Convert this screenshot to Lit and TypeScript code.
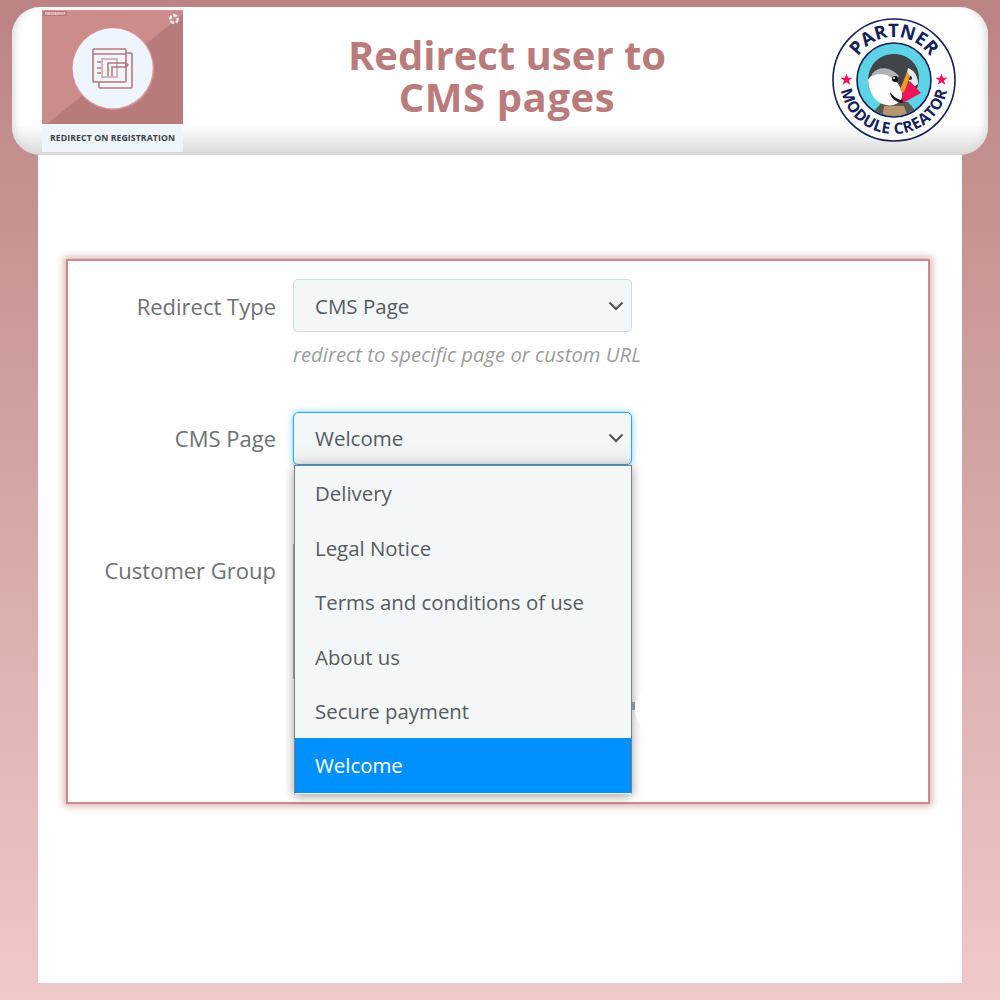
import { LitElement, html, css, svg } from "lit";
import { customElement } from "lit/decorators.js";

const chevron = html`<svg class="chev" viewBox="0 0 16 10" width="16" height="10"><path d="M1.5 1.5 L8 8 L14.500 1.500" fill="none" stroke="#4a4f52" stroke-width="2"/></svg>`;

const star = "l1.6 4.2 4.4 .1 -3.5 2.700 1.300 4.300 -3.800 -2.500 -3.800 2.500 1.300 -4.300 -3.500 -2.700 4.400 -.1z";

const badge = svg`
  <defs>
    <path id="arcTop" d="M 19 62 A 43 43 0 0 1 105 62"/>
    <path id="arcBot" d="M 8 62 A 54 54 0 0 0 116 62"/>
    <clipPath id="inner"><circle cx="62" cy="62" r="36"/></clipPath>
  </defs>
  <circle cx="62" cy="62" r="61" fill="#fff" stroke="#14205a" stroke-width="1.6"/>
  <circle cx="62" cy="62" r="37" fill="#5fd3e6" stroke="#14205a" stroke-width="1.6"/>
  <text font-family="'Open Sans',sans-serif" font-weight="700" font-size="18.5" fill="#14205a" letter-spacing="0"><textPath href="#arcTop" startOffset="50%" text-anchor="middle">PARTNER</textPath></text>
  <text font-family="'Open Sans',sans-serif" font-weight="700" font-size="15.5" fill="#14205a" letter-spacing="0.4"><textPath href="#arcBot" startOffset="50%" text-anchor="middle">MODULE CREATOR</textPath></text>
  <path d="M14.500 55.500 ${star}" fill="#f0145a"/>
  <path d="M109.500 55.500 ${star}" fill="#f0145a"/>
  <g clip-path="url(#inner)">
    <path d="M38 98 L50 84 H76 L88 98 V100 H38Z" fill="#5a5a50"/>
    <path d="M50 100 L52 88 H72 L76 100Z" fill="#b8946f"/>
    <path d="M36 64 C36 44 50 36 62 36 C76 36 87 46 87 60 C87 72 80 82 68 84 C50 90 38 80 36 64Z" fill="#3f4548"/>
    <path d="M36 62 C40 55 48 54 54 56 C62 60 68 66 70 74 C72 84 62 89 54 87 C44 85 37 76 36 62Z" fill="#fff"/>
    <path d="M40 56 C46 48 58 48 67 58 L64 62 C56 56 48 54 40 58Z" fill="#aeb4b8"/>
    <path d="M76 50 C82 52 86 58 86 66 L80 70 C76 62 74 56 76 50Z" fill="#e8e8e8"/>
    <path d="M58 74 C62 80 68 82 72 83 L72 85 C64 85 58 80 58 74Z" fill="#1a1a1a"/>
    <circle cx="63" cy="61" r="3" fill="#111"/><circle cx="62" cy="60" r="1" fill="#fff"/>
    <circle cx="78" cy="60" r="2" fill="#222"/>
    <path d="M68 72 L75 54 L78 58 L72 76Z" fill="#f39a1e"/>
  </g>
  <path d="M70 77 L78 63 L89 75 L71 85 Z" fill="#f0145a"/>
`;

const thumbIcon = svg`
  <g fill="none" stroke="#b77a7a" stroke-width="1.6">
    <rect x="57" y="43" width="33" height="35" rx="1"/>
    <rect x="51" y="39" width="33" height="33" rx="1" fill="#eef5fd"/>
    <path d="M51 44 H84"/>
    <rect x="60" y="49" width="15" height="18" stroke="#d5a5a5"/>
    <path d="M66 66 V53 H84 M70 66 V57 H84"/>
    <path d="M83 51 L87 55 L83 59Z" fill="#b77a7a" stroke="none"/>
    <path d="M55 52 h4 M55 58 h4 M55 63 h4"/>
  </g>`;

@customElement("app-root")
export class AppRoot extends LitElement {
  static styles = css`
    :host {
      display: block;
      width: 1000px;
      height: 1000px;
      overflow: hidden;
      font-family: "Open Sans", sans-serif;
      background: linear-gradient(#bb8484 0%, #f0c9c9 100%);
    }
    .page { padding-top: 7px; position: relative; }
    .header {
      height: 148px;
      margin: 0 12px;
      border-radius: 28px;
      background: linear-gradient(#ffffff 0%, #ffffff 80%, #d8d8d8 100%);
      box-shadow: inset 8px 0 8px -6px #d8d8d8, inset -8px 0 8px -6px #d8d8d8;
      display: grid;
      grid-template-columns: 141px 1fr 124px;
      align-items: center;
      padding: 0 32px 0 30px;
      position: relative;
      z-index: 1;
    }
    .thumb {
      width: 141px;
      height: 142px;
      align-self: start;
      margin-top: 3px;
      display: flex;
      flex-direction: column;
    }
    .thumb svg { display: block; }
    .thumb-label {
      height: 28px;
      background: #eef5fd;
      color: #3c3f44;
      font-size: 8.7px;
      font-weight: 700;
      letter-spacing: 0.1px;
      text-align: center;
      line-height: 29px;
      white-space: nowrap;
    }
    h1 {
      margin: 0 1px 10px 0;
      text-align: center;
      color: #b97b7b;
      font-size: 40px;
      line-height: 42px;
      font-weight: 700;
    }
    .line-two { letter-spacing: 0.6px; }
    .badge { display: block; margin-bottom: 3px; }
    .panel {
      background: #fff;
      margin: 0 38px;
      height: 828px;
      padding: 104px 32px 0 28px;
      box-sizing: border-box;
    }
    .card {
      height: 545px;
      box-sizing: border-box;
      border: 2.5px solid #c98c8c;
      box-shadow: 0 0 7px 2px rgba(190, 120, 120, 0.6);
      padding: 18px 0 0 0;
      display: flex;
      flex-direction: column;
    }
    .row {
      display: grid;
      grid-template-columns: 208px 339px;
      column-gap: 17px;
      align-items: start;
    }
    .label {
      text-align: right;
      color: #6d7173;
      font-size: 22px;
      line-height: 54px;
      white-space: nowrap;
    }
    .second .label { line-height: 52px; }
    .control { position: relative; }
    .select {
      height: 53px;
      box-sizing: border-box;
      background: #f3f7f8;
      border: 1.5px solid #c5dde5;
      border-radius: 5px;
      padding: 0 7px 0 21px;
      display: flex;
      align-items: center;
      justify-content: space-between;
      color: #565b5e;
      font-size: 20.5px;
    }
    .select.open {
      border-color: #27a9ee;
      box-shadow: 0 0 6px rgba(60, 180, 250, 0.7);
      background: linear-gradient(#f3f7f8 60%, #ebeeee 100%);
      padding-bottom: 2px;
    }
    .help {
      margin-top: 7px;
      height: 32px;
      color: #9a9d9e;
      font-style: italic;
      font-size: 20.3px;
      line-height: 30px;
      white-space: nowrap;
    }
    .second { margin-top: 41px; }
    .third { margin-top: 78px; }
    .ghost {
      margin-top: 1px;
      height: 135px;
      border-left: 1.5px solid #a3b4bb;
    }
    .list {
      position: absolute;
      left: 1px;
      top: 53px;
      width: 338px;
      box-sizing: border-box;
      padding-top: 0.4px;
      background: #f3f7f8;
      border: 1.5px solid #7e7e7e;
      border-bottom: 1px solid #fff;
      box-shadow: 0 2px 10px rgba(0, 0, 0, 0.38);
      z-index: 2;
    }
    .opt {
      height: 54.4px;
      line-height: 54.4px;
      padding-left: 20px;
      color: #565b5e;
      font-size: 20.4px;
      white-space: nowrap;
    }
    .opt.sel { background: #0091ff; color: #fff; }
    .bump {
      position: absolute;
      left: 342px;
      top: 276px;
      width: 36px;
      height: 42px;
      border-radius: 50%;
      background: #fff;
      z-index: 3;
    }
    .bump::before {
      content: "";
      position: absolute;
      left: -3px;
      top: 14px;
      width: 3px;
      height: 8px;
      background: #7d95a8;
    }
  `;

  render() {
    const options = ["Delivery", "Legal Notice", "Terms and conditions of use", "About us", "Secure payment", "Welcome"];
    return html`<div class="page">
      <div class="header">
        <div class="thumb">
          <svg width="141" height="114" viewBox="0 0 141 114">
            <rect width="141" height="114" fill="#cd8c8c"/>
            <rect width="141" height="1" fill="#ec8d8d"/>
            <path d="M141 4 V114 H5 Z" fill="#b77b7b"/>
            <rect x="1" y="1" width="24" height="5" fill="#b67878"/>
            <text x="3" y="4.600" font-family="'Open Sans',sans-serif" font-size="3.200" font-weight="700" fill="#f3e4e4">PRESTASHOP</text>
            <circle cx="71.200" cy="58.800" r="41" fill="#e8a5a5" opacity=".7"/>
            <circle cx="70.700" cy="58.300" r="40" fill="#eef5fd"/>
            ${thumbIcon}
            <g fill="none" stroke="#f4f0f0" stroke-width="2.400"><circle cx="132" cy="9" r="3.800" stroke-dasharray="4 1.500"/></g>
          </svg>
          <div class="thumb-label">REDIRECT ON REGISTRATION</div>
        </div>
        <h1>Redirect user to<br /><span class="line-two">CMS pages</span></h1>
        <svg class="badge" width="124" height="124" viewBox="0 0 124 124">${badge}</svg>
      </div>
      <div class="panel">
        <div class="card">
          <div class="row">
            <div class="label">Redirect Type</div>
            <div class="control">
              <div class="select">CMS Page ${chevron}</div>
              <div class="help">redirect to specific page or custom URL</div>
            </div>
          </div>
          <div class="row second">
            <div class="label">CMS Page</div>
            <div class="control">
              <div class="select open">Welcome ${chevron}</div>
              <div class="list">
                ${options.map((o) => html`<div class="opt ${o === "Welcome" ? "sel" : ""}">${o}</div>`)}
              </div>
              <div class="bump"></div>
            </div>
          </div>
          <div class="row third">
            <div class="label">Customer Group</div>
            <div class="control"><div class="ghost"></div></div>
          </div>
        </div>
      </div>
    </div>`;
  }
}
